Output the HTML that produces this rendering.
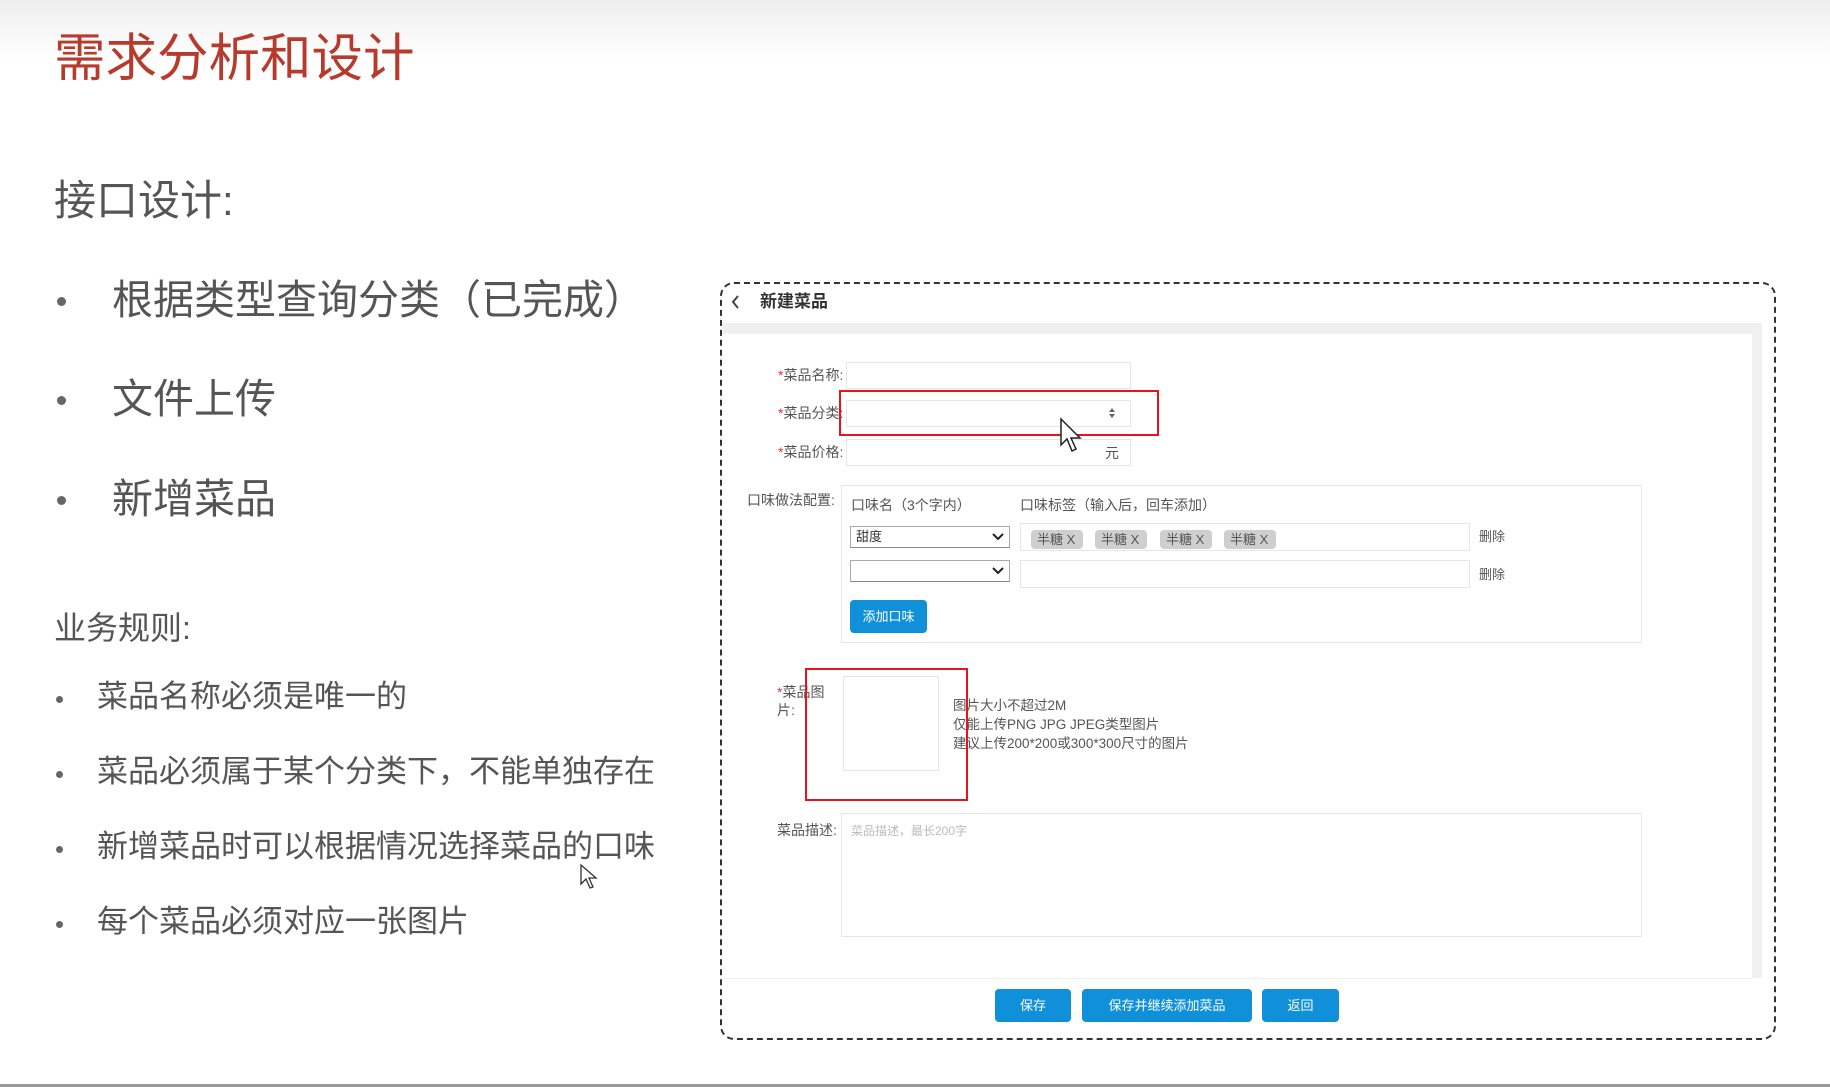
<!DOCTYPE html>
<html><head><meta charset="utf-8">
<style>
*{margin:0;padding:0;box-sizing:border-box}
html,body{width:1830px;height:1087px;overflow:hidden;background:#fff}
body{position:relative;font-family:"Liberation Sans","Noto Sans CJK SC",sans-serif;color:#555}
.a{position:absolute;white-space:nowrap}
.topg{position:absolute;left:0;top:0;width:1830px;height:60px;background:linear-gradient(#eeeeee,#ffffff)}
.title{left:54px;top:28px;font-size:51.5px;color:#b83a2c;line-height:60px}
.h2{left:54px;top:178px;font-size:42px;line-height:46px;color:#555}
.b1{font-size:41px;line-height:46px;color:#555;left:112px}
.dot1{position:absolute;left:57px;width:9px;height:9px;border-radius:50%;background:#666}
.h3{left:54px;top:610px;font-size:32px;line-height:36px}
.b2{font-size:31px;line-height:36px;left:97px;color:#555}
.dot2{position:absolute;left:56px;width:7px;height:7px;border-radius:50%;background:#666}
.box{position:absolute;left:720px;top:282px;width:1056px;height:758px;border:2px dashed #333;border-radius:14px}
.band{position:absolute;left:723px;top:323px;width:1039px;height:11px;background:#f0f0f0}
.rside{position:absolute;left:1752px;top:334px;width:10px;height:644px;background:#f0f0f0}
.lab{font-size:14px;color:#555;line-height:16px}
.lab i{color:#e33;font-style:normal}
.inp{position:absolute;border:1px solid #e6e6e6;background:#fff}
.sel{position:absolute;border:1px solid #aaa;border-bottom-color:#888;background:#fff;font-size:13px;color:#333;line-height:20px;padding-left:5px}
.sel svg{position:absolute;right:5px;top:6px}
.tag{position:absolute;top:530px;width:52px;height:19px;background:#cfcfcf;border-radius:4px;font-size:13px;line-height:19px;color:#555;padding-left:6px}
.btn{position:absolute;background:#1190da;color:#fff;font-size:13px;text-align:center;border-radius:4px}
.red{position:absolute;border:2px solid #e8141c}
</style></head><body>
<div class="topg"></div>
<div class="a title">需求分析和设计</div>
<div class="a h2">接口设计:</div>
<div class="dot1" style="top:297px"></div><div class="a b1" style="top:277px">根据类型查询分类（已完成）</div>
<div class="dot1" style="top:396px"></div><div class="a b1" style="top:376px">文件上传</div>
<div class="dot1" style="top:496px"></div><div class="a b1" style="top:476px">新增菜品</div>
<div class="a h3">业务规则:</div>
<div class="dot2" style="top:696px"></div><div class="a b2" style="top:679px">菜品名称必须是唯一的</div>
<div class="dot2" style="top:771px"></div><div class="a b2" style="top:754px">菜品必须属于某个分类下，不能单独存在</div>
<div class="dot2" style="top:846px"></div><div class="a b2" style="top:829px">新增菜品时可以根据情况选择菜品的口味</div>
<div class="dot2" style="top:921px"></div><div class="a b2" style="top:904px">每个菜品必须对应一张图片</div>
<svg class="a" style="left:580px;top:864px" width="18" height="26" viewBox="0 0 18 26"><path d="M1 1 L1 20 L6 15 L10 24 L13 23 L9 14 L16 14 Z" fill="#fff" stroke="#333" stroke-width="1.3"/></svg>

<div class="box"></div>
<svg class="a" style="left:731px;top:294px" width="10" height="16" viewBox="0 0 10 16"><path d="M7 2 L2 8 L7 14" fill="none" stroke="#444" stroke-width="2"/></svg>
<div class="a" style="left:760px;top:292px;font-size:17px;font-weight:bold;color:#333;line-height:20px">新建菜品</div>
<div class="band"></div>
<div class="rside"></div>

<div class="a lab" style="left:778px;top:367px"><i>*</i>菜品名称:</div>
<div class="inp" style="left:846px;top:362px;width:285px;height:27px"></div>
<div class="a lab" style="left:778px;top:405px"><i>*</i>菜品分类:</div>
<div class="inp" style="left:846px;top:400px;width:285px;height:27px"></div>
<svg class="a" style="left:1108px;top:407px" width="8" height="12" viewBox="0 0 8 12"><path d="M1 5 L4 1 L7 5 Z M1 7 L4 11 L7 7 Z" fill="#666"/></svg>
<div class="a lab" style="left:778px;top:444px"><i>*</i>菜品价格:</div>
<div class="inp" style="left:846px;top:439px;width:285px;height:27px"></div>
<div class="a lab" style="left:1105px;top:445px">元</div>
<div class="red" style="left:839px;top:390px;width:320px;height:46px"></div>
<svg class="a" style="left:1059px;top:417px" width="26" height="38" viewBox="0 0 26 38"><path d="M2 2 L2 28 L8 22 L13 34 L17 32 L12 21 L21 21 Z" fill="#fff" stroke="#222" stroke-width="1.5"/></svg>

<div class="a lab" style="left:747px;top:492px">口味做法配置:</div>
<div class="inp" style="left:841px;top:485px;width:801px;height:158px"></div>
<div class="a lab" style="left:851px;top:497px">口味名（3个字内）</div>
<div class="a lab" style="left:1020px;top:497px">口味标签（输入后，回车添加）</div>
<div class="sel" style="left:850px;top:526px;width:160px;height:22px">甜度<svg width="12" height="8" viewBox="0 0 12 8"><path d="M1 1 L6 6 L11 1" fill="none" stroke="#222" stroke-width="2"/></svg></div>
<div class="inp" style="left:1020px;top:523px;width:450px;height:28px"></div>
<div class="tag" style="left:1031px">半糖 X</div>
<div class="tag" style="left:1095px">半糖 X</div>
<div class="tag" style="left:1160px">半糖 X</div>
<div class="tag" style="left:1224px">半糖 X</div>
<div class="a lab" style="left:1479px;top:529px;font-size:13px">删除</div>
<div class="sel" style="left:850px;top:560px;width:160px;height:22px"><svg width="12" height="8" viewBox="0 0 12 8"><path d="M1 1 L6 6 L11 1" fill="none" stroke="#222" stroke-width="2"/></svg></div>
<div class="inp" style="left:1020px;top:560px;width:450px;height:28px"></div>
<div class="a lab" style="left:1479px;top:567px;font-size:13px">删除</div>
<div class="btn" style="left:850px;top:600px;width:77px;height:33px;line-height:33px">添加口味</div>

<div class="a lab" style="left:777px;top:684px"><i>*</i>菜品图</div>
<div class="a lab" style="left:777px;top:702px">片:</div>
<div class="inp" style="left:843px;top:676px;width:96px;height:95px"></div>
<div class="a lab" style="left:953px;top:696px;line-height:19px;font-size:13.5px">图片大小不超过2M<br>仅能上传PNG JPG JPEG类型图片<br>建议上传200*200或300*300尺寸的图片</div>
<div class="red" style="left:805px;top:668px;width:163px;height:133px"></div>

<div class="a lab" style="left:777px;top:822px">菜品描述:</div>
<div class="inp" style="left:841px;top:813px;width:801px;height:124px"></div>
<div class="a" style="left:851px;top:823px;font-size:12px;color:#bbb;line-height:16px">菜品描述，最长200字</div>

<div class="a" style="left:723px;top:978px;width:1029px;height:1px;background:#eee"></div>
<div class="btn" style="left:995px;top:989px;width:76px;height:33px;line-height:33px">保存</div>
<div class="btn" style="left:1082px;top:989px;width:170px;height:33px;line-height:33px">保存并继续添加菜品</div>
<div class="btn" style="left:1262px;top:989px;width:77px;height:33px;line-height:33px">返回</div>

<div class="a" style="left:0;top:1084px;width:1830px;height:3px;background:#999"></div>
</body></html>
